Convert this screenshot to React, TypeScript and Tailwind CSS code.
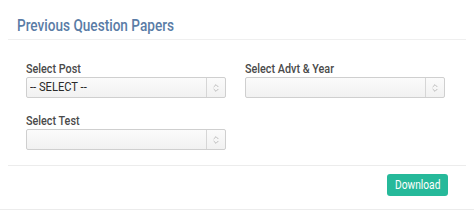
import { ChevronsUpDown } from "lucide-react";

function SelectBox({ value }: { value?: string }) {
    return (
        <div className="flex h-[21px] w-[200px] rounded-[2px] border border-[#cfcfcf] bg-gradient-to-b from-[#fbfbfb] to-[#f1f1f1]">
            <div className="flex-1 px-[3px] text-[12px] leading-[19px] text-[#2a2a2a]">
                <span className="inline-block origin-left scale-x-[0.93]">{value}</span>
            </div>
            <div className="flex w-[19px] items-center justify-center border-l border-[#d6d6d6]">
                <ChevronsUpDown className="h-[10px] w-[10px] text-[#9a9a9a]" strokeWidth={1.5} />
            </div>
        </div>
    );
}

function Field({ label, value }: { label: string; value?: string }) {
    return (
        <div className="flex flex-col gap-[1px]">
            <label className="text-[12px] leading-[14px] font-medium text-[#4a4a4a]">
                <span className="inline-block origin-left scale-x-[0.9]">{label}</span>
            </label>
            <SelectBox value={value} />
        </div>
    );
}

export default function App() {
    return (
        <div className="h-[223px] w-[474px] bg-white font-['Roboto',sans-serif]">
            <div className="mx-2 flex h-[40px] items-end border-b border-[#efefef] pb-[4px] pl-[9px]">
                <h2 className="origin-left scale-x-[0.8] text-[17px] leading-[20px] font-medium text-[#5a7ca6]">Previous Question Papers</h2>
            </div>
            <div className="mx-2 border-b border-[#ececec] pb-[15px] pl-[18px] pt-[22px]">
                <div className="grid grid-cols-[200px_200px] gap-x-[19px] gap-y-[16px]">
                    <Field label="Select Post" value="-- SELECT --" />
                    <Field label="Select Advt & Year" />
                    <Field label="Select Test" />
                </div>
            </div>
            <div className="mx-2 flex justify-end pr-[18px] pt-[8px]">
                <button className="h-[22px] w-[61px] rounded-[3px] bg-[#26b99a] text-[12px] text-white">
                    <span className="inline-block scale-x-[0.85]">Download</span>
                </button>
            </div>
            <div className="mt-[13px] border-b border-[#ececec]" />
        </div>
    );
}
